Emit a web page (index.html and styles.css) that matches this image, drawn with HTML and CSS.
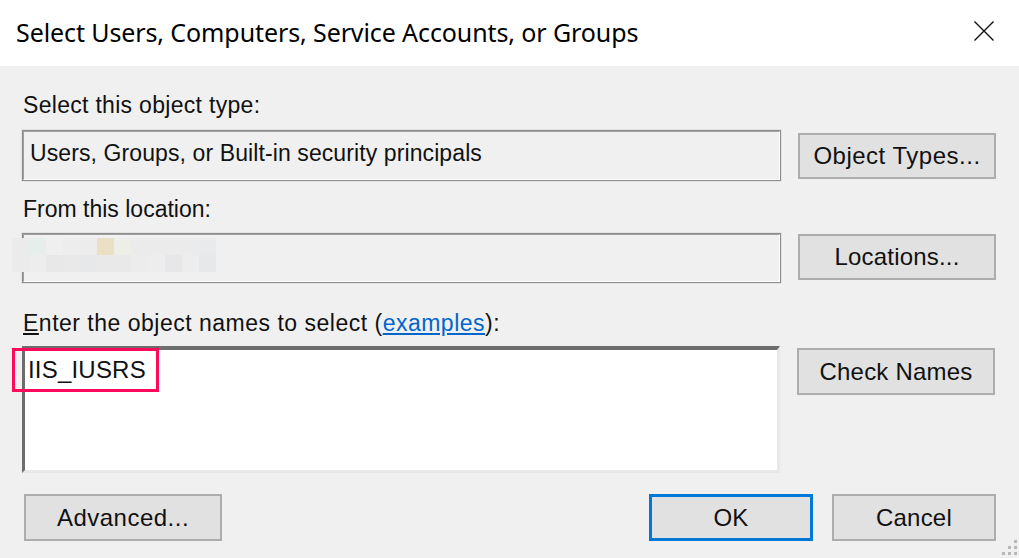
FILE: index.html
```html
<!DOCTYPE html>
<html>
<head>
<meta charset="utf-8">
<link rel="stylesheet" href="styles.css">
</head>
<body>
<div class="dialog">
  <div class="titlebar">
    <div class="title">Select Users, Computers, Service Accounts, or Groups</div>
    <svg class="close" width="22" height="22" viewBox="0 0 22 22"><path d="M1.5 1.5L20.5 20.5M20.5 1.5L1.5 20.5" stroke="#111" stroke-width="1.4" fill="none"/></svg>
  </div>
  <div class="content">
    <div class="label l1">Select this object type:</div>
    <div class="row r1">
      <div class="field">Users, Groups, or Built-in security principals</div>
      <div class="btn b1">Object Types...</div>
    </div>
    <div class="label l2">From this location:</div>
    <div class="row r2">
      <div class="field loc"></div>
      <div class="btn b2">Locations...</div>
    </div>
    <div class="label l3"><span class="u">E</span>nter the object names to select (<span class="link">examples</span>):</div>
    <div class="row r3">
      <div class="area"><span class="names">IIS_IUSRS</span></div>
      <div class="btn b3">Check Names</div>
    </div>
    <div class="bottom">
      <div class="btn adv">Advanced...</div>
      <div class="spacer"></div>
      <div class="btn ok">OK</div>
      <div class="btn cancel">Cancel</div>
    </div>
  </div>
  <div class="blur">
    <span style="background:#ebebeb"></span><span style="background:#e6eeeb"></span><span style="background:#efefef"></span><span style="background:#ecedec"></span><span style="background:#ececec"></span><span style="background:#ebdfc4"></span><span style="background:#eeeee9"></span><span style="background:#ebebeb"></span><span style="background:#ebebeb"></span><span style="background:#ebebeb"></span><span style="background:#ebebeb"></span><span style="background:#e9eaeb"></span>
    <span style="background:#ebebeb"></span><span style="background:#ededed"></span><span style="background:#e8e8e8"></span><span style="background:#e9e9ea"></span><span style="background:#e7e8ea"></span><span style="background:#e9e9e9"></span><span style="background:#e9e9e9"></span><span style="background:#ececec"></span><span style="background:#ededed"></span><span style="background:#e7e7e9"></span><span style="background:#ededed"></span><span style="background:#e7e8ea"></span>
  </div>
  <div class="grip">
    <i></i><i></i><i></i><i></i><i></i><i></i>
  </div>
</div>
</body>
</html>
```

FILE: styles.css
```css
html, body {
  margin: 0;
  padding: 0;
}
body {
  width: 1019px;
  height: 558px;
  overflow: hidden;
  background: #f0f0f0;
  font-family: "Liberation Sans", Arial, sans-serif;
  color: #000;
}
.dialog {
  position: relative;
  width: 1019px;
  height: 558px;
}
.titlebar {
  height: 66px;
  background: #fff;
  display: flex;
  align-items: center;
  justify-content: space-between;
  padding: 0 24px 0 16px;
  box-sizing: border-box;
}
.title {
  font-family: "Noto Sans", "Open Sans", sans-serif;
  font-size: 25px;
  color: #000;
  margin-top: -2px;
  letter-spacing: -0.1px;
}
.close {
  margin-top: -4px;
}
.content {
  padding: 0 23px 0 22px;
  display: flex;
  flex-direction: column;
}
.label {
  font-size: 23px;
  line-height: 24px;
  padding-left: 1px;
  color: #111;
}
.l1 { margin-top: 27px; letter-spacing: 0.3px; }
.l2 { margin-top: 16px; }
.l3 { margin-top: 28px; letter-spacing: 0.5px; }
.u { text-decoration: underline; }
.link {
  color: #0066cc;
  text-decoration: underline;
}
.row {
  display: flex;
  gap: 17px;
  align-items: flex-start;
}
.r1 { margin-top: 13px; }
.r2 { margin-top: 12px; }
.r3 { margin-top: 11px; }
.field {
  width: 759px;
  height: 51px;
  box-sizing: border-box;
  border-top: 2px solid #a0a0a0;
  border-left: 2px solid #a0a0a0;
  border-right: 2px solid #ffffff;
  border-bottom: 2px solid #ffffff;
  box-shadow: 0 0 0 1px #e3e3e3, inset 0 0 0 1px #f0f0f0;
  outline: 1px solid #8c8c8c;
  outline-offset: -1px;
  background: #f0f0f0;
  font-size: 23px;
  line-height: 26px;
  padding: 8px 0 0 6px;
  letter-spacing: 0.1px;
  color: #111;
}
.r2 .field { height: 50px; }
.btn {
  width: 198px;
  height: 46px;
  box-sizing: border-box;
  background: #e1e1e1;
  border: 2px solid #adadad;
  display: flex;
  align-items: center;
  justify-content: center;
  font-size: 24px;
  letter-spacing: 0.2px;
  color: #111;
  flex: none;
}
.b1 { margin-top: 3px; letter-spacing: 0.5px; }
.b2 { margin-top: 1px; }
.b3 { margin-top: 2px; height: 47px; }
.area {
  width: 758px;
  height: 127px;
  box-sizing: border-box;
  background: #fff;
  border-top: 4px solid #6d6d6d;
  border-left: 3px solid #6d6d6d;
  border-right: 3px solid #e8e8e8;
  border-bottom: 3px solid #e8e8e8;
  position: relative;
}
.names {
  position: absolute;
  left: -13px;
  top: -2px;
  width: 128px;
  height: 36px;
  border: 3px solid #ff0a5a;
  padding: 2px 0 0 13px;
  font-size: 24px;
  line-height: 34px;
  letter-spacing: 0.2px;
  color: #111;
}
.bottom {
  display: flex;
  margin-top: 21px;
  gap: 19px;
  padding-left: 2px;
}
.adv {
  width: 198px;
  height: 47px;
  letter-spacing: 0.5px;
}
.spacer { flex: 1; }
.ok {
  width: 164px;
  height: 47px;
  border: 3px solid #0078d7;
}
.cancel {
  width: 164px;
  height: 47px;
}
.blur {
  position: absolute;
  left: 12px;
  top: 238px;
  width: 204px;
  height: 34px;
  display: grid;
  grid-template-columns: repeat(12, 17px);
  grid-template-rows: 17px 17px;
}
.blur span { display: block; }
.grip {
  position: absolute;
  right: 2px;
  bottom: 2px;
  width: 16px;
  height: 16px;
}
.grip i {
  position: absolute;
  width: 3px;
  height: 3px;
  background: #b8b8b8;
}
.grip i:nth-child(1) { right: 0; top: 0; }
.grip i:nth-child(2) { right: 0; top: 6px; }
.grip i:nth-child(3) { right: 0; top: 12px; }
.grip i:nth-child(4) { right: 6px; top: 6px; }
.grip i:nth-child(5) { right: 6px; top: 12px; }
.grip i:nth-child(6) { right: 12px; top: 12px; }
```
